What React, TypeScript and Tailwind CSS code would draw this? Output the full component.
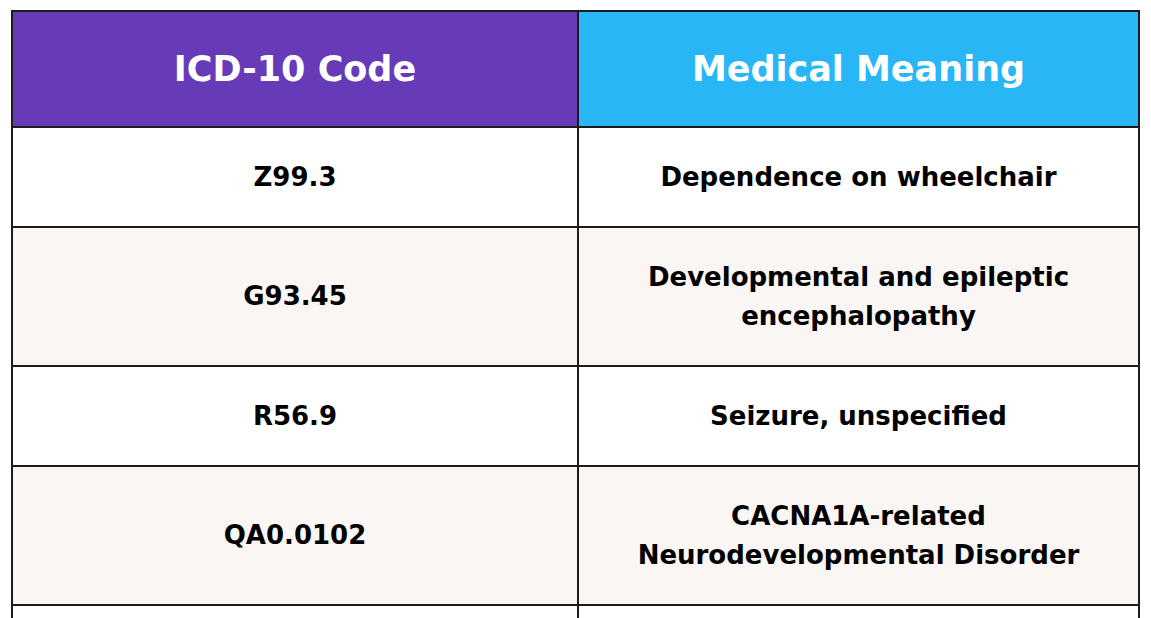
import React from "react";

const rows = [
  { code: "Z99.3", meaning: ["Dependence on wheelchair"] },
  { code: "G93.45", meaning: ["Developmental and epileptic", "encephalopathy"] },
  { code: "R56.9", meaning: ["Seizure, unspecified"] },
  { code: "QA0.0102", meaning: ["CACNA1A-related", "Neurodevelopmental Disorder"] },
];

export default function App() {
  return (
    <div
      className="w-[1151px] h-[618px] overflow-hidden bg-white px-[11px] pt-[10px]"
      style={{ fontFamily: '"DejaVu Sans", "Noto Sans", sans-serif' }}
    >
      <table className="w-full border-collapse border-2 border-[#1c1c1c] table-fixed">
        <thead>
          <tr>
            <th className="w-[566px] h-[116px] bg-[#673ab7] border-2 border-[#1c1c1c] text-white text-[35px] font-bold text-center">
              ICD-10 Code
            </th>
            <th className="h-[116px] bg-[#29b6f6] border-2 border-[#1c1c1c] text-white text-[35px] font-bold text-center">
              Medical Meaning
            </th>
          </tr>
        </thead>
        <tbody>
          {rows.map((row, i) => (
            <tr key={row.code} className={i % 2 === 1 ? "bg-[#f9f6f3]" : "bg-white"}>
              <td className="py-[29.5px] border-2 border-[#1c1c1c] text-center text-[26px] leading-[39px] font-bold text-black">
                {row.code}
              </td>
              <td className="py-[29.5px] border-2 border-[#1c1c1c] text-center text-[26px] leading-[39px] font-bold text-black">
                {row.meaning.map((line) => (
                  <div key={line}>{line}</div>
                ))}
              </td>
            </tr>
          ))}
          {/* next row, cut off by the window */}
          <tr className="bg-white">
            <td className="h-[100px] border-2 border-[#1c1c1c]" />
            <td className="h-[100px] border-2 border-[#1c1c1c]" />
          </tr>
        </tbody>
      </table>
    </div>
  );
}
